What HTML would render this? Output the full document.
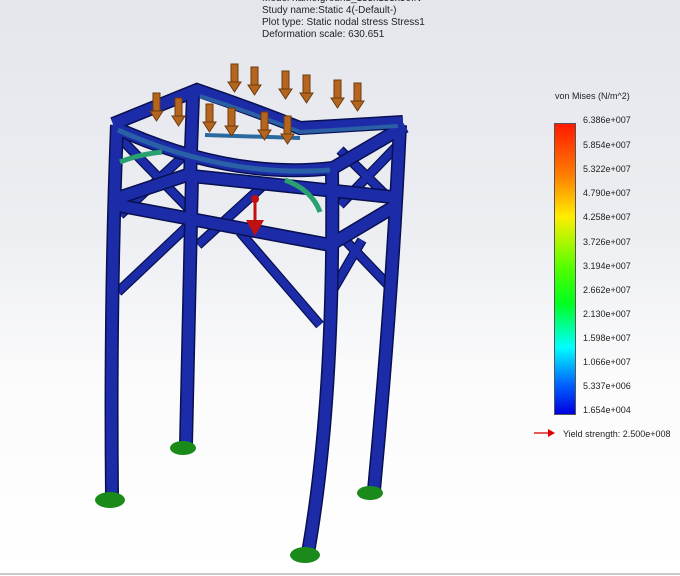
<!DOCTYPE html>
<html><head><style>
html,body{margin:0;padding:0}
body{width:680px;height:576px;overflow:hidden;background:linear-gradient(#e4e6ec 0%,#eceef2 40%,#fbfbfc 65%,#ffffff 100%);font-family:"Liberation Sans",sans-serif;position:relative}
.t{position:absolute;left:262px;font-size:10px;color:#222;line-height:12px}
.lab{position:absolute;left:583px;font-size:9px;color:#222}
</style></head><body>
<div class="t" style="top:-7px">Model name:ground_155x155x50.N</div>
<div class="t" style="top:5px">Study name:Static 4(-Default-)</div>
<div class="t" style="top:17px">Plot type: Static nodal stress Stress1</div>
<div class="t" style="top:29px">Deformation scale: 630.651</div>
<div style="position:absolute;left:555px;top:91px;font-size:9px;color:#222">von Mises (N/m^2)</div>
<div style="position:absolute;left:554px;top:123px;width:20px;height:290px;background:linear-gradient(#ff1a00 0%,#ff8000 18%,#ffee00 32%,#50ff00 50%,#00ff20 62%,#00ffff 77%,#0060ff 90%,#0000e0 100%);border:1px solid #555"></div>
<div class="lab" style="top:115px">6.386e+007</div>
<div class="lab" style="top:140px">5.854e+007</div>
<div class="lab" style="top:164px">5.322e+007</div>
<div class="lab" style="top:188px">4.790e+007</div>
<div class="lab" style="top:212px">4.258e+007</div>
<div class="lab" style="top:237px">3.726e+007</div>
<div class="lab" style="top:261px">3.194e+007</div>
<div class="lab" style="top:285px">2.662e+007</div>
<div class="lab" style="top:309px">2.130e+007</div>
<div class="lab" style="top:333px">1.598e+007</div>
<div class="lab" style="top:357px">1.066e+007</div>
<div class="lab" style="top:381px">5.337e+006</div>
<div class="lab" style="top:405px">1.654e+004</div>
<div style="position:absolute;left:563px;top:429px;font-size:9px;color:#222">Yield strength: 2.500e+008</div>
<svg width="680" height="576" style="position:absolute;left:0;top:0">
<defs>
<g id="d">
<path d="M118 292 L192 222"/><path d="M198 245 L266 183"/><path d="M240 232 L320 325"/>
<path d="M330 295 L362 240"/><path d="M345 240 L388 285"/>
<path d="M120 138 L190 210"/><path d="M120 215 L190 150"/>
<path d="M340 150 L396 205"/><path d="M340 205 L398 145"/>
</g>
<g id="b">
<path d="M192 175 L186 445"/><path d="M400 125 Q392 300 374 490"/>
<path d="M192 176 L392 197"/>
<path d="M118 198 L193 173"/>
<path d="M330 245 L397 205"/>
<path d="M116 205 L330 245"/>
<path d="M113 124 L197 90 Q250 108 300 128 L403 122"/>
<path d="M117 125 Q110 300 112 495"/>
<path d="M116 128 Q230 180 333 168 L405 126"/>
<path d="M332 168 Q335 400 308 553"/>
<path d="M193 95 L190 178"/>
</g>
</defs>
<g stroke-linecap="butt" fill="none">
<use href="#d" stroke="#081050" stroke-width="10"/>
<use href="#d" stroke="#1c2ca8" stroke-width="7.5"/>
<use href="#b" stroke="#081050" stroke-width="14"/>
<use href="#b" stroke="#1c2ca8" stroke-width="11"/>
<path d="M118 130 Q225 178 330 170" stroke="#2a60a8" stroke-width="5"/>
<path d="M200 96 Q250 112 300 132 L398 126" stroke="#2a5ea5" stroke-width="4"/>
<path d="M120 162 Q140 154 162 152" stroke="#2aa070" stroke-width="5"/>
<path d="M285 180 Q312 190 320 212" stroke="#2aa070" stroke-width="5"/>
<path d="M205 135 L300 138" stroke="#2a6aa0" stroke-width="4"/>
</g>
<g fill="#1a8a1a">
<ellipse cx="110" cy="500" rx="15" ry="8"/><ellipse cx="183" cy="448" rx="13" ry="7"/>
<ellipse cx="305" cy="555" rx="15" ry="8"/><ellipse cx="370" cy="493" rx="13" ry="7"/>
</g>
<g fill="#b5651d" stroke="#6a3a10" stroke-width="1">
<rect x="231" y="64" width="7" height="18"/><polygon points="228,82 241,82 234.5,92"/>
<rect x="251" y="67" width="7" height="18"/><polygon points="248,85 261,85 254.5,95"/>
<rect x="282" y="71" width="7" height="18"/><polygon points="279,89 292,89 285.5,99"/>
<rect x="303" y="75" width="7" height="18"/><polygon points="300,93 313,93 306.5,103"/>
<rect x="334" y="80" width="7" height="18"/><polygon points="331,98 344,98 337.5,108"/>
<rect x="354" y="83" width="7" height="18"/><polygon points="351,101 364,101 357.5,111"/>
<rect x="153" y="93" width="7" height="18"/><polygon points="150,111 163,111 156.5,121"/>
<rect x="175" y="98" width="7" height="18"/><polygon points="172,116 185,116 178.5,126"/>
<rect x="206" y="104" width="7" height="18"/><polygon points="203,122 216,122 209.5,132"/>
<rect x="228" y="108" width="7" height="18"/><polygon points="225,126 238,126 231.5,136"/>
<rect x="261" y="112" width="7" height="18"/><polygon points="258,130 271,130 264.5,140"/>
<rect x="284" y="116" width="7" height="18"/><polygon points="281,134 294,134 287.5,144"/>
</g>
<line x1="255" y1="200" x2="255" y2="222" stroke="#c01010" stroke-width="3"/>
<circle cx="255" cy="199" r="4" fill="#c01010"/>
<polygon points="246,220 264,220 255,236" fill="#c01010"/>
<line x1="534" y1="433" x2="549" y2="433" stroke="#d22" stroke-width="1.5"/>
<polygon points="548,429 555,433 548,437" fill="#d00"/>
<line x1="0" y1="574" x2="680" y2="574" stroke="#c8c8c8" stroke-width="2"/>
</svg>
</body></html>
